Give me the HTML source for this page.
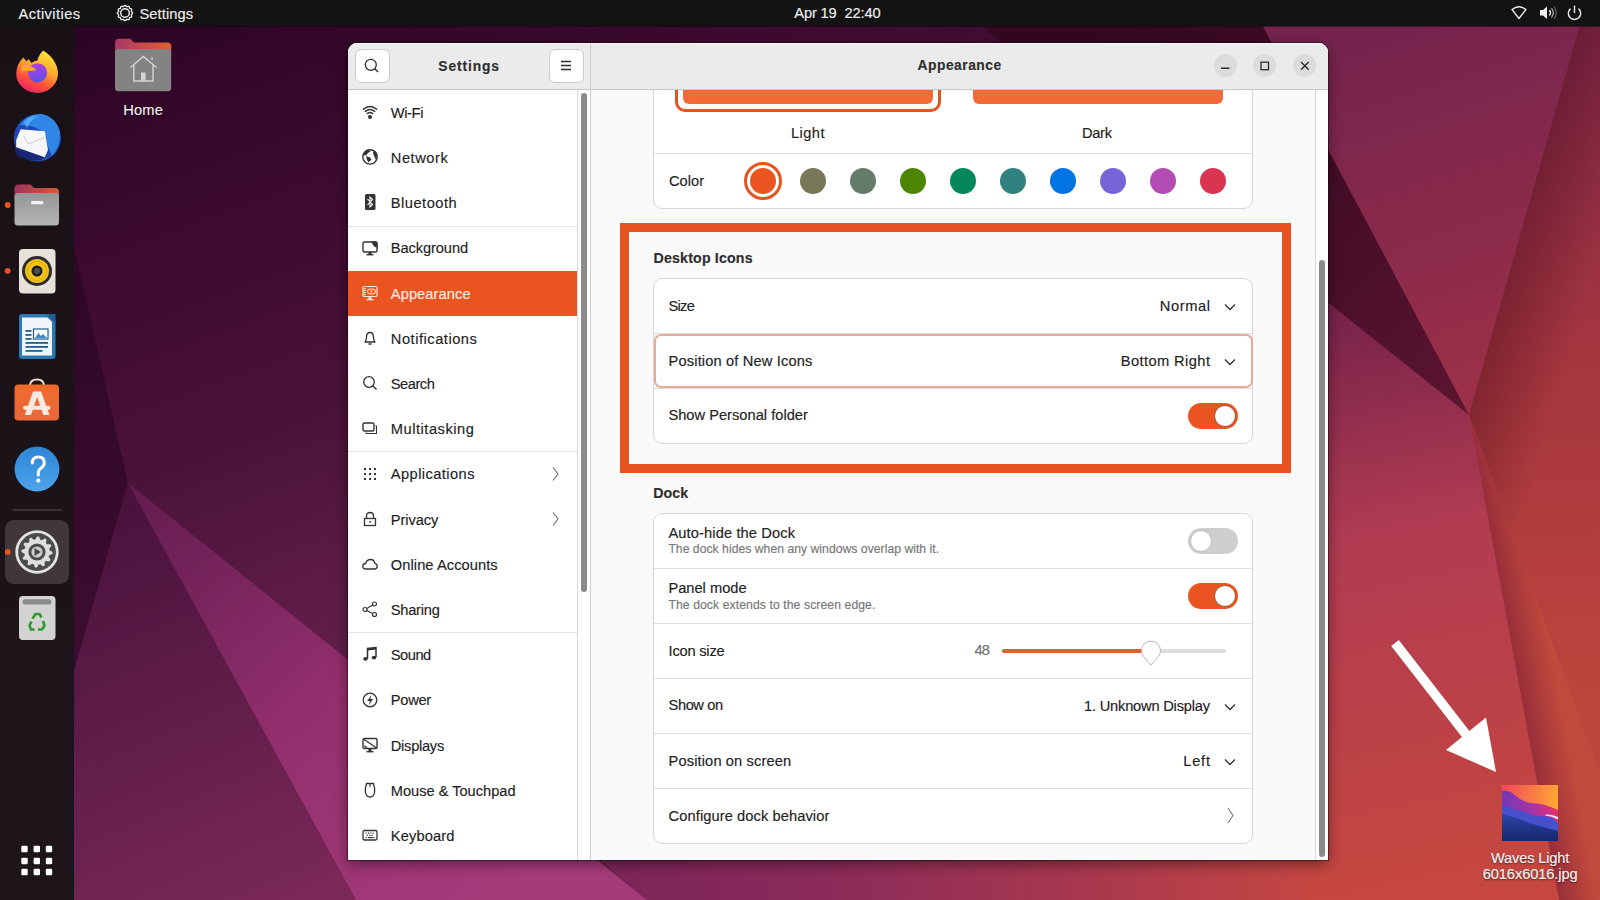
<!DOCTYPE html>
<html><head><meta charset="utf-8">
<style>
*{margin:0;padding:0;box-sizing:border-box}
html,body{width:1600px;height:900px;overflow:hidden;background:#3a0b2c;font-family:"Liberation Sans",sans-serif}
.abs{position:absolute}
.t{position:absolute;white-space:nowrap;line-height:1;-webkit-text-stroke:0.15px currentColor;font-family:"Liberation Sans",sans-serif}
</style></head><body>
<svg id="wall" width="1600" height="900" viewBox="0 0 1600 900" style="position:absolute;left:0;top:0">
<defs>
<linearGradient id="gUL" gradientUnits="userSpaceOnUse" x1="120" y1="30" x2="360" y2="680">
 <stop offset="0" stop-color="#2d0524"/>
 <stop offset="0.31" stop-color="#3d0a32"/>
 <stop offset="0.61" stop-color="#4a1238"/>
 <stop offset="0.88" stop-color="#5e1c46"/>
 <stop offset="1" stop-color="#641e4a"/>
</linearGradient>
<linearGradient id="gFarL" gradientUnits="userSpaceOnUse" x1="74" y1="250" x2="110" y2="670">
 <stop offset="0" stop-color="#2e0626"/>
 <stop offset="1" stop-color="#3c0d32"/>
</linearGradient>
<linearGradient id="gLowL" gradientUnits="userSpaceOnUse" x1="128" y1="500" x2="300" y2="900">
 <stop offset="0" stop-color="#48123c"/>
 <stop offset="1" stop-color="#7a2858"/>
</linearGradient>
<linearGradient id="gWedgeL" gradientUnits="userSpaceOnUse" x1="128" y1="483" x2="500" y2="900">
 <stop offset="0" stop-color="#621c4e"/>
 <stop offset="0.55" stop-color="#95306e"/>
 <stop offset="1" stop-color="#a63b7a"/>
</linearGradient>
<linearGradient id="gBot" gradientUnits="userSpaceOnUse" x1="600" y1="0" x2="1340" y2="0">
 <stop offset="0" stop-color="#7c2458"/>
 <stop offset="0.3" stop-color="#8a2b5a"/>
 <stop offset="0.65" stop-color="#a8384f"/>
 <stop offset="1" stop-color="#c84841"/>
</linearGradient>
<linearGradient id="gTop" gradientUnits="userSpaceOnUse" x1="348" y1="0" x2="980" y2="0">
 <stop offset="0" stop-color="#3e0a30"/>
 <stop offset="1" stop-color="#4e1538"/>
</linearGradient>
<linearGradient id="gDarkW" gradientUnits="userSpaceOnUse" x1="1100" y1="27" x2="1469" y2="415">
 <stop offset="0" stop-color="#330820"/>
 <stop offset="0.6" stop-color="#480e28"/>
 <stop offset="1" stop-color="#5c1530"/>
</linearGradient>
<linearGradient id="gA" gradientUnits="userSpaceOnUse" x1="1340" y1="40" x2="1460" y2="400">
 <stop offset="0" stop-color="#74234e"/>
 <stop offset="1" stop-color="#9c3048"/>
</linearGradient>
<linearGradient id="gB" gradientUnits="userSpaceOnUse" x1="1330" y1="300" x2="1450" y2="880">
 <stop offset="0" stop-color="#74214a"/>
 <stop offset="0.4" stop-color="#b03b52"/>
 <stop offset="1" stop-color="#c6473f"/>
</linearGradient>
<linearGradient id="gC" gradientUnits="userSpaceOnUse" x1="1590" y1="30" x2="1600" y2="700">
 <stop offset="0" stop-color="#862a4a"/>
 <stop offset="0.5" stop-color="#a5363f"/>
 <stop offset="1" stop-color="#be453c"/>
</linearGradient>
<linearGradient id="gCsh" gradientUnits="userSpaceOnUse" x1="1525" y1="220" x2="1602" y2="242">
 <stop offset="0" stop-color="#300010" stop-opacity="0.32"/>
 <stop offset="1" stop-color="#300010" stop-opacity="0"/>
</linearGradient>
<linearGradient id="gBand" gradientUnits="userSpaceOnUse" x1="1518" y1="680" x2="1556" y2="673">
 <stop offset="0" stop-color="#982e3a"/>
 <stop offset="1" stop-color="#c24a3c"/>
</linearGradient>
</defs>
<rect x="0" y="0" width="1600" height="900" fill="url(#gUL)"/>
<polygon points="74,247 128,483 74,672" fill="url(#gFarL)"/>
<polygon points="128,483 74,672 74,900 356,900" fill="url(#gLowL)"/>
<polygon points="128,483 647,900 356,900" fill="url(#gWedgeL)"/>
<polygon points="647,900 600,860 1340,860 1340,900" fill="url(#gBot)"/>
<rect x="1300" y="25" width="300" height="875" fill="url(#gB)"/>
<polygon points="1262,25 1580,25 1469,415" fill="url(#gA)"/>
<polygon points="980,25 1262,25 1469,415" fill="url(#gDarkW)"/>
<polygon points="1580,25 1600,25 1600,773 1469,415" fill="url(#gC)"/>
<polygon points="1580,25 1600,25 1600,773 1469,415" fill="url(#gCsh)"/>
<polygon points="1469,415 1600,773 1600,900 1559,900" fill="url(#gBand)"/>
</svg>
<div class="abs" style="left:0;top:0;width:1600px;height:26px;background:#131313;box-shadow:0 1px 0 rgba(20,0,10,.55)"></div>
<div class="t" style="left:18.50px;top:6.82px;font-size:14.67px;letter-spacing:0.411px;color:#eeeeee;">Activities</div>
<div class="t" style="left:139.40px;top:6.82px;font-size:14.67px;letter-spacing:0.107px;color:#eeeeee;">Settings</div>
<div class="t" style="left:794.30px;top:5.82px;font-size:14.67px;letter-spacing:-0.146px;color:#eeeeee;white-space:pre;">Apr 19  22:40</div>
<svg class="abs" style="left:115px;top:3px" width="20" height="20" viewBox="0 0 20 20">
<path d="M17.65,10.00 L17.60,10.27 L17.45,10.52 L17.23,10.76 L16.97,10.98 L16.72,11.19 L16.51,11.38 L16.37,11.59 L16.31,11.81 L16.33,12.06 L16.41,12.33 L16.53,12.64 L16.64,12.96 L16.71,13.27 L16.71,13.57 L16.63,13.82 L16.45,14.03 L16.19,14.18 L15.88,14.27 L15.55,14.34 L15.23,14.39 L14.95,14.45 L14.72,14.56 L14.56,14.72 L14.45,14.95 L14.39,15.23 L14.34,15.55 L14.27,15.88 L14.18,16.19 L14.03,16.45 L13.83,16.63 L13.57,16.71 L13.27,16.71 L12.96,16.64 L12.64,16.53 L12.33,16.41 L12.06,16.33 L11.81,16.31 L11.59,16.37 L11.38,16.51 L11.19,16.72 L10.98,16.97 L10.76,17.23 L10.52,17.45 L10.27,17.60 L10.00,17.65 L9.73,17.60 L9.48,17.45 L9.24,17.23 L9.02,16.97 L8.81,16.72 L8.62,16.51 L8.41,16.37 L8.19,16.31 L7.94,16.33 L7.67,16.41 L7.36,16.53 L7.04,16.64 L6.73,16.71 L6.43,16.71 L6.18,16.63 L5.97,16.45 L5.82,16.19 L5.73,15.88 L5.66,15.55 L5.61,15.23 L5.55,14.95 L5.44,14.72 L5.28,14.56 L5.05,14.45 L4.77,14.39 L4.45,14.34 L4.12,14.27 L3.81,14.18 L3.55,14.03 L3.37,13.82 L3.29,13.57 L3.29,13.27 L3.36,12.96 L3.47,12.64 L3.59,12.33 L3.67,12.06 L3.69,11.81 L3.63,11.59 L3.49,11.38 L3.28,11.19 L3.03,10.98 L2.77,10.76 L2.55,10.52 L2.40,10.27 L2.35,10.00 L2.40,9.73 L2.55,9.48 L2.77,9.24 L3.03,9.02 L3.28,8.81 L3.49,8.62 L3.63,8.41 L3.69,8.19 L3.67,7.94 L3.59,7.67 L3.47,7.36 L3.36,7.04 L3.29,6.73 L3.29,6.43 L3.37,6.17 L3.55,5.97 L3.81,5.82 L4.12,5.73 L4.45,5.66 L4.77,5.61 L5.05,5.55 L5.28,5.44 L5.44,5.28 L5.55,5.05 L5.61,4.77 L5.66,4.45 L5.73,4.12 L5.82,3.81 L5.97,3.55 L6.17,3.37 L6.43,3.29 L6.73,3.29 L7.04,3.36 L7.36,3.47 L7.67,3.59 L7.94,3.67 L8.19,3.69 L8.41,3.63 L8.62,3.49 L8.81,3.28 L9.02,3.03 L9.24,2.77 L9.48,2.55 L9.73,2.40 L10.00,2.35 L10.27,2.40 L10.52,2.55 L10.76,2.77 L10.98,3.03 L11.19,3.28 L11.38,3.49 L11.59,3.63 L11.81,3.69 L12.06,3.67 L12.33,3.59 L12.64,3.47 L12.96,3.36 L13.27,3.29 L13.57,3.29 L13.83,3.37 L14.03,3.55 L14.18,3.81 L14.27,4.12 L14.34,4.45 L14.39,4.77 L14.45,5.05 L14.56,5.28 L14.72,5.44 L14.95,5.55 L15.23,5.61 L15.55,5.66 L15.88,5.73 L16.19,5.82 L16.45,5.97 L16.63,6.17 L16.71,6.43 L16.71,6.73 L16.64,7.04 L16.53,7.36 L16.41,7.67 L16.33,7.94 L16.31,8.19 L16.37,8.41 L16.51,8.62 L16.72,8.81 L16.97,9.02 L17.23,9.24 L17.45,9.48 L17.60,9.73 Z" fill="none" stroke="#eee" stroke-width="1.3"/>
<circle cx="10" cy="10" r="4.3" fill="none" stroke="#eee" stroke-width="1.4"/></svg>
<svg class="abs" style="left:1505px;top:0" width="95" height="25" viewBox="0 0 95 25">
<path d="M7,9.5 Q14,4 21,9.5 L14,18.5 Z" fill="none" stroke="#eee" stroke-width="1.3" stroke-linejoin="round"/>
<path d="M35,10 L38,10 L42,6.5 L42,19 L38,15.5 L35,15.5 Z" fill="#eee"/>
<path d="M44.5,10 Q46.5,12.7 44.5,15.5" fill="none" stroke="#eee" stroke-width="1.3"/>
<path d="M46.5,8 Q50,12.7 46.5,17.5" fill="none" stroke="#bbb" stroke-width="1.1"/>
<path d="M49,6.5 Q53.5,12.7 49,19" fill="none" stroke="#777" stroke-width="1"/>
<path d="M65.5,8.6 A6.2,6.2 0 1 0 73.5,8.6" fill="none" stroke="#eee" stroke-width="1.4"/>
<line x1="69.5" y1="5.6" x2="69.5" y2="13" stroke="#eee" stroke-width="1.4"/>
</svg>
<div class="abs" style="left:0;top:26px;width:73.5px;height:874px;background:linear-gradient(#1a1116,#1e151b)"></div>
<svg class="abs" style="left:0;top:0" width="74" height="900" viewBox="0 0 74 900">
<defs>
<linearGradient id="ffo" x1="0.8" y1="0.05" x2="0.35" y2="1"><stop offset="0" stop-color="#ffe53d"/><stop offset="0.4" stop-color="#ffab2c"/><stop offset="0.72" stop-color="#ff5238"/><stop offset="1" stop-color="#ea2566"/></linearGradient>
<linearGradient id="ffp" x1="0.3" y1="0" x2="0.5" y2="1"><stop offset="0" stop-color="#b43ee6"/><stop offset="1" stop-color="#5c50e6"/></linearGradient>
<linearGradient id="tbb" x1="0" y1="0" x2="1" y2="1"><stop offset="0" stop-color="#1e9cf0"/><stop offset="1" stop-color="#2a3fa8"/></linearGradient>
<linearGradient id="fold" x1="0" y1="0" x2="1" y2="0"><stop offset="0" stop-color="#9e3560"/><stop offset="1" stop-color="#d85a30"/></linearGradient>
<linearGradient id="fbody" x1="0" y1="0" x2="0" y2="1"><stop offset="0" stop-color="#969696"/><stop offset="1" stop-color="#b4b4b4"/></linearGradient>
<linearGradient id="hlp" x1="0" y1="0" x2="0" y2="1"><stop offset="0" stop-color="#2d86d6"/><stop offset="1" stop-color="#4ea4ea"/></linearGradient>
<linearGradient id="shop" x1="0" y1="0" x2="0" y2="1"><stop offset="0" stop-color="#f06a2c"/><stop offset="1" stop-color="#e8683a"/></linearGradient>
</defs>
<!-- firefox -->
<path d="M23.3,57.5 L26.5,61.5 L28.5,59 L31.5,63 Q34.5,60.5 37.5,60.5 Q38.5,55 43.2,50.5 Q53,56.5 56.8,66.5 Q58.5,72 57.8,76 A20.9,19.5 0 0 1 16.2,74 Q16.2,64.5 23.3,57.5 Z" fill="url(#ffo)"/>
<circle cx="37.5" cy="72.8" r="9.6" fill="url(#ffp)"/>
<path d="M21.5,66 Q28,63 36.5,69.8 Q31,72 27,70.5 Q24,70 21.5,72 Z" fill="#ffa62e"/>
<!-- thunderbird -->
<circle cx="37.4" cy="138" r="23.6" fill="#2048b0"/>
<path d="M20,125 Q28,113 42,114 Q56,117 60,132 Q61,146 52,156 Q48,148 46,138 Q42,128 30,126 Z" fill="#2f86e6"/>
<path d="M24,122 Q30,115 38,116 Q30,120 27,128 Z" fill="#5ab4ff" opacity="0.8"/>
<path d="M18,157 Q14,150 14.5,146 L44,157.3 Q40,162 30,160 Z" fill="#1a2470" opacity="0.9"/>
<path d="M16.2,139.9 L20.6,129.3 L44.8,131.2 L48,149.8 L44.8,157.3 L16.2,147.3 Z" fill="#f6f6f8"/>
<path d="M23.7,136.1 L28.7,143.9 L44.8,137.4" fill="none" stroke="#c8c8d0" stroke-width="0.9"/>
<!-- files -->
<path d="M14.5,189 Q14.5,184.5 18.5,184.5 L30.5,184.5 L34,188 L55,188 Q59,188 59,192 L59,200 L14.5,200 Z" fill="url(#fold)"/>
<rect x="14.5" y="193" width="44.5" height="32.6" rx="3.5" fill="url(#fbody)"/>
<rect x="31" y="201" width="12.5" height="3.2" rx="1.5" fill="#f4f4f4"/>
<circle cx="7.7" cy="205" r="2.9" fill="#e95420"/>
<!-- rhythmbox -->
<rect x="19" y="249" width="36.5" height="44.5" rx="4" fill="#e6e2da"/>
<circle cx="37" cy="271" r="15" fill="#2b2b2b"/>
<circle cx="37" cy="271" r="12" fill="#f0c419"/>
<circle cx="37" cy="271" r="9.5" fill="none" stroke="#d6a712" stroke-width="1"/>
<circle cx="37" cy="271" r="5.5" fill="#1e1e1e"/>
<circle cx="37" cy="271" r="3" fill="#505050"/>
<circle cx="7.7" cy="270.8" r="2.9" fill="#e95420"/>
<!-- writer -->
<path d="M19,317 Q19,314 22,314 L49,314 L55.5,320.5 L55.5,356 Q55.5,359 52.5,359 L22,359 Q19,359 19,356 Z" fill="#2b79b4"/>
<path d="M22,317.5 L47.5,317.5 L52,322 L52,355.5 L22,355.5 Z" fill="#f1f5f9"/>
<path d="M46,314 L55.5,314 L55.5,323.5 Z" fill="#1d5f93"/>
<rect x="25.5" y="330" width="6" height="1.8" fill="#1f5f8f"/>
<rect x="25.5" y="334" width="6" height="1.8" fill="#1f5f8f"/>
<rect x="25.5" y="338" width="6" height="1.8" fill="#1f5f8f"/>
<rect x="33.5" y="329" width="14.5" height="10" fill="#fff" stroke="#1f5f8f" stroke-width="1.2"/>
<path d="M35,338 L38.5,333 L41,336 L43,334 L47,338 Z" fill="#3a8ccc"/>
<rect x="25.5" y="342" width="22.5" height="1.8" fill="#1f5f8f"/>
<rect x="25.5" y="346" width="22.5" height="1.8" fill="#1f5f8f"/>
<rect x="25.5" y="350" width="17" height="1.8" fill="#1f5f8f"/>
<!-- app center -->
<path d="M30,386 Q30,379.5 37,379.5 Q44,379.5 44,386" fill="none" stroke="#f2d8c8" stroke-width="1.8"/>
<rect x="14.5" y="384.5" width="44.5" height="36" rx="4" fill="url(#shop)"/>
<path d="M33,391.5 L41.2,391.5 L49.5,415 L43.3,415 L37.1,397 L31,415 L24.8,415 Z" fill="#fbe9df"/>
<rect x="23" y="405.8" width="27.6" height="4" rx="2" fill="#fbe9df"/>
<!-- help -->
<circle cx="37" cy="469" r="22.4" fill="url(#hlp)"/>
<path d="M32.3,463 Q32.3,457 38.3,457 Q44.3,457 44.3,462.5 Q44.3,466 40.8,468.2 Q38.3,469.8 38.3,473.5 L38.3,475" fill="none" stroke="#fff" stroke-width="3" stroke-linecap="round"/><circle cx="38.3" cy="480.6" r="2.1" fill="#fff"/>
<!-- separator -->
<rect x="12.5" y="509.5" width="49.5" height="1" fill="#5a5056"/>
<!-- settings active -->
<rect x="5" y="520" width="64" height="64" rx="9" fill="#3f373b"/>
<circle cx="7.7" cy="552" r="2.9" fill="#e95420"/>
<circle cx="37" cy="552" r="21.7" fill="#e4e4e4"/>
<circle cx="37" cy="552" r="18.9" fill="#4b4b4b"/>
<path d="M52.60,552.00 L52.47,554.04 L49.17,555.26 L48.64,556.82 L50.51,559.80 L49.38,561.50 L45.91,560.91 L44.67,562.00 L44.80,565.51 L42.97,566.41 L40.26,564.17 L38.64,564.49 L37.00,567.60 L34.96,567.47 L33.74,564.17 L32.18,563.64 L29.20,565.51 L27.50,564.38 L28.09,560.91 L27.00,559.67 L23.49,559.80 L22.59,557.97 L24.83,555.26 L24.51,553.64 L21.40,552.00 L21.53,549.96 L24.83,548.74 L25.36,547.18 L23.49,544.20 L24.62,542.50 L28.09,543.09 L29.33,542.00 L29.20,538.49 L31.03,537.59 L33.74,539.83 L35.36,539.51 L37.00,536.40 L39.04,536.53 L40.26,539.83 L41.82,540.36 L44.80,538.49 L46.50,539.62 L45.91,543.09 L47.00,544.33 L50.51,544.20 L51.41,546.03 L49.17,548.74 L49.49,550.36 Z" fill="#dedede"/>
<circle cx="37" cy="552" r="8.6" fill="#4b4b4b"/>
<circle cx="37" cy="552" r="5.6" fill="#cfcfcf"/>
<path d="M34.5,548 L41,552 L34.5,556 Z" fill="#4b4b4b"/>
<!-- trash -->
<rect x="19" y="596" width="36.5" height="44" rx="4" fill="#d3d3d3"/>
<rect x="22.5" y="599.3" width="29" height="5.2" rx="2.5" fill="#8c8c8c"/>
<g fill="none" stroke="#2f9a2f" stroke-width="2.6">
<path d="M32.5,618.5 L35.5,614 L39.5,614 L41.5,617.5"/>
<path d="M43,621 L44.5,625.5 L42,629.5 L38,629.5"/>
<path d="M34.5,629.5 L31,629.5 L29.5,625.5 L31.5,621.5"/>
</g>
<!-- app grid -->
<g fill="#ffffff">
<rect x="21.3" y="845.8" width="6.4" height="6.4" rx="1.3"/><rect x="33.599999999999994" y="845.8" width="6.4" height="6.4" rx="1.3"/><rect x="45.8" y="845.8" width="6.4" height="6.4" rx="1.3"/><rect x="21.3" y="857.8" width="6.4" height="6.4" rx="1.3"/><rect x="33.599999999999994" y="857.8" width="6.4" height="6.4" rx="1.3"/><rect x="45.8" y="857.8" width="6.4" height="6.4" rx="1.3"/><rect x="21.3" y="868.8" width="6.4" height="6.4" rx="1.3"/><rect x="33.599999999999994" y="868.8" width="6.4" height="6.4" rx="1.3"/><rect x="45.8" y="868.8" width="6.4" height="6.4" rx="1.3"/>
</g>
</svg>
<svg class="abs" style="left:110px;top:34px" width="66" height="64" viewBox="110 34 66 64">
<defs><linearGradient id="hfold" x1="0" y1="0" x2="1" y2="0"><stop offset="0" stop-color="#a83668"/><stop offset="1" stop-color="#e06030"/></linearGradient></defs>
<path d="M115,43 Q115,38.8 119,38.8 L130,38.8 L134,42.5 L167.5,42.5 Q171.2,42.5 171.2,46 L171.2,55 L115,55 Z" fill="url(#hfold)"/>
<rect x="115" y="49" width="56.2" height="42.3" rx="3.5" fill="#838383"/>
<path d="M130.5,67.5 L143.3,56.5 L156.5,67.5" fill="none" stroke="#d4d4d4" stroke-width="1.4"/>
<path d="M133.8,65 L133.8,81 L153,81 L153,65" fill="none" stroke="#d4d4d4" stroke-width="1.4"/>
<rect x="141" y="72.5" width="4.6" height="8.5" fill="#d4d4d4"/>
<circle cx="152" cy="58.5" r="1.1" fill="#d4d4d4"/>
</svg>
<div class="t" style="left:123.30px;top:102.82px;font-size:14.67px;letter-spacing:0.133px;color:#f0f0f0;text-shadow:0 1px 2px rgba(0,0,0,.6);">Home</div>
<svg class="abs" style="left:1502px;top:785px" width="56" height="56" viewBox="0 0 56 56">
<defs>
<linearGradient id="wsky" x1="0" y1="0" x2="1" y2="0.2"><stop offset="0" stop-color="#f2455e"/><stop offset="1" stop-color="#ffa632"/></linearGradient>
<linearGradient id="wpurp" x1="0" y1="0" x2="1" y2="0"><stop offset="0" stop-color="#7438b4"/><stop offset="0.55" stop-color="#a834a8"/><stop offset="1" stop-color="#e8306a"/></linearGradient>
<linearGradient id="wnavy" x1="0" y1="0" x2="0" y2="1"><stop offset="0" stop-color="#2a44a8"/><stop offset="1" stop-color="#18286a"/></linearGradient>
</defs>
<rect width="56" height="56" fill="url(#wsky)"/>
<path d="M0,6 Q8,5 14,11 Q20,17 30,18 Q44,19 56,25 L56,56 L0,56 Z" fill="url(#wpurp)"/>
<path d="M0,20 Q12,24 22,27 Q34,32 42,31 Q50,31 56,38 L56,56 L0,56 Z" fill="#4650cc"/>
<path d="M0,29 Q16,33 28,38 Q40,42 56,46 L56,56 L0,56 Z" fill="url(#wnavy)"/>
<path d="M43,30.5 Q50,31 56,34.5 L56,32 Q50,29 44,29.5 Z" fill="#e4e6ff"/>
</svg>
<div class="t" style="left:1491.00px;top:851.12px;font-size:14.67px;letter-spacing:-0.175px;color:#f4f4f4;text-shadow:0 1px 2px rgba(0,0,0,.6);">Waves Light</div>
<div class="t" style="left:1482.70px;top:867.12px;font-size:14.67px;letter-spacing:-0.096px;color:#f4f4f4;text-shadow:0 1px 2px rgba(0,0,0,.6);">6016x6016.jpg</div>
<svg class="abs" style="left:1380px;top:630px" width="130" height="150" viewBox="1380 630 130 150">
<line x1="1395" y1="643" x2="1468" y2="737" stroke="#ffffff" stroke-width="9.5"/>
<polygon points="1446,750 1486,717.5 1496,772" fill="#ffffff"/>
</svg>
<div class="abs" style="left:348px;top:43px;width:980px;height:817px;border-radius:9px 9px 0 0;box-shadow:0 0 0 1px rgba(20,0,10,.45),0 4px 14px rgba(0,0,0,.45)"></div>
<div class="abs" style="left:348px;top:43px;width:980px;height:817px;border-radius:9px 9px 0 0;overflow:hidden;background:#fafafa">
<div class="abs" style="left:-348px;top:-43px;width:1600px;height:900px">
<div class="abs" style="left:348px;top:43px;width:980px;height:46px;background:#ebebeb;box-shadow:inset 0 1px 0 #fbfbfb"></div>
<div class="abs" style="left:348px;top:89px;width:980px;height:1px;background:#c9c9c9"></div>
<div class="abs" style="left:348px;top:90px;width:242px;height:770px;background:#ffffff"></div>
<div class="abs" style="left:590px;top:43px;width:1px;height:817px;background:#cdcdcd"></div>
<div class="abs" style="left:577px;top:90px;width:1px;height:770px;background:#d8d8d8"></div>
<div class="abs" style="left:581px;top:92.5px;width:6px;height:499px;border-radius:3px;background:#8a8a8a"></div>
<div class="abs" style="left:1315px;top:90px;width:1px;height:770px;background:#d8d8d8"></div>
<div class="abs" style="left:1316px;top:90px;width:12px;height:770px;background:#fdfdfd"></div>
<div class="abs" style="left:1319px;top:260px;width:6px;height:597px;border-radius:3px;background:#8a8a8a"></div>
<div class="abs" style="left:355px;top:49px;width:35px;height:34px;border-radius:6px;background:#fff;border:1px solid #cbcbcb"></div>
<svg class="abs" style="left:360px;top:54px" width="24" height="24" viewBox="0 0 24 24">
<circle cx="10.8" cy="10.8" r="5.5" fill="none" stroke="#2e2e2e" stroke-width="1.3"/>
<line x1="14.8" y1="14.8" x2="18" y2="18" stroke="#2e2e2e" stroke-width="1.5"/></svg>
<div class="abs" style="left:548.5px;top:49px;width:35px;height:34px;border-radius:6px;background:#fff;border:1px solid #cbcbcb"></div>
<svg class="abs" style="left:556px;top:56px" width="20" height="20" viewBox="0 0 20 20">
<g stroke="#2e2e2e" stroke-width="1.3"><line x1="5" y1="5.5" x2="15" y2="5.5"/><line x1="5" y1="9.5" x2="15" y2="9.5"/><line x1="5" y1="13.5" x2="15" y2="13.5"/></g></svg>
<div class="t" style="left:438.30px;top:59.85px;font-size:13.8px;letter-spacing:0.893px;color:#2e2e2e;font-weight:bold;">Settings</div>
<div class="t" style="left:917.50px;top:59.45px;font-size:13.8px;letter-spacing:0.522px;color:#2e2e2e;font-weight:bold;">Appearance</div>
<div class="abs" style="left:1213.9px;top:54px;width:23px;height:23px;border-radius:50%;background:#dcdcdc"></div>
<div class="abs" style="left:1253.2px;top:54px;width:23px;height:23px;border-radius:50%;background:#dcdcdc"></div>
<div class="abs" style="left:1293.0px;top:54px;width:23px;height:23px;border-radius:50%;background:#dcdcdc"></div>
<svg class="abs" style="left:1200px;top:50px" width="120" height="30" viewBox="1200 50 120 30">
<line x1="1221" y1="68.2" x2="1229.5" y2="68.2" stroke="#2e2e2e" stroke-width="1.4"/>
<rect x="1261" y="62.2" width="7.5" height="7.5" fill="none" stroke="#2e2e2e" stroke-width="1.3"/>
<path d="M1301,62 L1308.7,69.7 M1308.7,62 L1301,69.7" stroke="#2e2e2e" stroke-width="1.4"/>
</svg>
<div class="abs" style="left:348px;top:270.5px;width:229px;height:45px;background:#e95420"></div>
<div class="abs" style="left:348px;top:225.5px;width:229px;height:1px;background:#e4e4e4"></div>
<div class="abs" style="left:348px;top:451px;width:229px;height:1px;background:#e4e4e4"></div>
<div class="abs" style="left:348px;top:632px;width:229px;height:1px;background:#e4e4e4"></div>
<div class="t" style="left:390.80px;top:105.82px;font-size:14.67px;letter-spacing:-0.387px;color:#1e1e1e;">Wi-Fi</div>
<svg class="abs" style="left:360px;top:102.00px" width="20" height="20" viewBox="0 0 20 20"><g fill="none" stroke="#333333" stroke-width="1.45" stroke-linecap="round"><path d="M3.3,7.3 Q10,1.7 16.7,7.3"/><path d="M5.3,9.4 Q10,5.4 14.7,9.4"/><path d="M7.3,11.6 Q10,9.4 12.7,11.6"/></g><circle cx="10" cy="14.9" r="2" fill="#333333"/></svg>
<div class="t" style="left:390.80px;top:151.02px;font-size:14.67px;letter-spacing:0.542px;color:#1e1e1e;">Network</div>
<svg class="abs" style="left:360px;top:147.20px" width="20" height="20" viewBox="0 0 20 20"><circle cx="10" cy="9.9" r="7.2" fill="none" stroke="#333333" stroke-width="1.4"/><path d="M3.5,8 L5,4.5 L8,2.5 L10.5,4.5 L8,6 L6,8.5 Z" fill="#333333"/><path d="M6,9 L10,10.5 L11.5,12.5 L8.5,15.5 L7,13 Z" fill="#333333"/><path d="M13,5 L16,4.5 L17,9 L16,13 L14.5,10 L13.5,7.5 Z" fill="#333333"/></svg>
<div class="t" style="left:390.80px;top:196.22px;font-size:14.67px;letter-spacing:0.487px;color:#1e1e1e;">Bluetooth</div>
<svg class="abs" style="left:360px;top:192.40px" width="20" height="20" viewBox="0 0 20 20"><g transform="translate(2,2)"><rect x="3" y="0" width="10.5" height="16" rx="1.5" fill="#333333"/><path d="M5.5,5 L10.5,10.5 L8,13 L8,3 L10.5,5.5 L5.5,11" fill="none" stroke="#fff" stroke-width="1.1"/></g></svg>
<div class="t" style="left:390.80px;top:241.42px;font-size:14.67px;letter-spacing:-0.100px;color:#1e1e1e;">Background</div>
<svg class="abs" style="left:360px;top:237.60px" width="20" height="20" viewBox="0 0 20 20"><g transform="translate(2,2)"><rect x="1" y="2" width="14" height="10" rx="1.5" fill="none" stroke="#333333" stroke-width="1.4"/><path d="M9.5,1.5 L14,1.5 Q15.5,1.5 15.5,3 L15.5,7.5 Q11,7.5 9.5,1.5 Z" fill="#333333"/><rect x="6.5" y="12" width="3" height="2" fill="#333333"/><rect x="4.5" y="14" width="7" height="1.4" fill="#333333"/></g></svg>
<div class="t" style="left:390.80px;top:286.62px;font-size:14.67px;letter-spacing:0.078px;color:#fdeee6;">Appearance</div>
<svg class="abs" style="left:360px;top:282.80px" width="20" height="20" viewBox="0 0 20 20"><g transform="translate(2,2)"><rect x="1" y="1.5" width="14" height="10" rx="1.3" fill="none" stroke="#fbe3d8" stroke-width="1.2"/><path d="M1.5,3.5 H4 M1.5,5.5 H4 M1.5,7.5 H4 M1.5,9.5 H4" stroke="#fbe3d8" stroke-width="1"/><ellipse cx="9.5" cy="6.5" rx="4" ry="2.5" fill="none" stroke="#fbe3d8" stroke-width="1.1"/><circle cx="9.5" cy="6.5" r="1.1" fill="#fbe3d8"/><rect x="6.5" y="12" width="3" height="2" fill="#fbe3d8"/><rect x="4.5" y="14" width="7" height="1.3" fill="#fbe3d8"/></g></svg>
<div class="t" style="left:390.80px;top:331.82px;font-size:14.67px;letter-spacing:0.517px;color:#1e1e1e;">Notifications</div>
<svg class="abs" style="left:360px;top:328.00px" width="20" height="20" viewBox="0 0 20 20"><g transform="translate(2,2)"><path d="M3,12 Q4.5,10.5 4.5,7 Q4.5,2.5 8,2.5 Q11.5,2.5 11.5,7 Q11.5,10.5 13,12 Z" fill="none" stroke="#333333" stroke-width="1.3" stroke-linejoin="round"/><path d="M6.5,14 H9.5" stroke="#333333" stroke-width="1.5"/></g></svg>
<div class="t" style="left:390.80px;top:377.02px;font-size:14.67px;letter-spacing:-0.480px;color:#1e1e1e;">Search</div>
<svg class="abs" style="left:360px;top:373.20px" width="20" height="20" viewBox="0 0 20 20"><g transform="translate(2,2)"><circle cx="7" cy="7" r="5.3" fill="none" stroke="#333333" stroke-width="1.3"/><line x1="10.8" y1="10.8" x2="14.5" y2="14.5" stroke="#333333" stroke-width="1.4"/></g></svg>
<div class="t" style="left:390.80px;top:422.22px;font-size:14.67px;letter-spacing:0.514px;color:#1e1e1e;">Multitasking</div>
<svg class="abs" style="left:360px;top:418.40px" width="20" height="20" viewBox="0 0 20 20"><g transform="translate(2,2)"><rect x="1" y="3" width="11" height="8" rx="1.5" fill="none" stroke="#333333" stroke-width="1.4"/><path d="M13.5,6 L14.5,6 L14.5,13.5 L4,13.5 L4,12.5" fill="none" stroke="#333333" stroke-width="1.1"/></g></svg>
<div class="t" style="left:390.80px;top:467.42px;font-size:14.67px;letter-spacing:0.427px;color:#1e1e1e;">Applications</div>
<svg class="abs" style="left:360px;top:463.60px" width="20" height="20" viewBox="0 0 20 20"><g transform="translate(2,2)"><g fill="#333333"><rect x="2" y="2" width="2" height="2"/><rect x="7" y="2" width="2" height="2"/><rect x="12" y="2" width="2" height="2"/><rect x="2" y="7" width="2" height="2"/><rect x="7" y="7" width="2" height="2"/><rect x="12" y="7" width="2" height="2"/><rect x="2" y="12" width="2" height="2"/><rect x="7" y="12" width="2" height="2"/><rect x="12" y="12" width="2" height="2"/></g></g></svg>
<svg class="abs" style="left:550px;top:465.60px" width="10" height="16" viewBox="0 0 10 16"><path d="M3,1.5 L8,8 L3,14.5" fill="none" stroke="#6a6a6a" stroke-width="1.1"/></svg>
<div class="t" style="left:390.80px;top:512.62px;font-size:14.67px;letter-spacing:-0.075px;color:#1e1e1e;">Privacy</div>
<svg class="abs" style="left:360px;top:508.80px" width="20" height="20" viewBox="0 0 20 20"><g transform="translate(2,2)"><path d="M4.5,7.5 V5 Q4.5,1.5 8,1.5 Q11.5,1.5 11.5,5 V7.5" fill="none" stroke="#333333" stroke-width="1.3"/><rect x="2.5" y="7.5" width="11" height="7" fill="none" stroke="#333333" stroke-width="1.3"/><rect x="7.2" y="10.2" width="1.6" height="1.6" fill="#333333"/></g></svg>
<svg class="abs" style="left:550px;top:510.80px" width="10" height="16" viewBox="0 0 10 16"><path d="M3,1.5 L8,8 L3,14.5" fill="none" stroke="#6a6a6a" stroke-width="1.1"/></svg>
<div class="t" style="left:390.80px;top:557.82px;font-size:14.67px;letter-spacing:0.068px;color:#1e1e1e;">Online Accounts</div>
<svg class="abs" style="left:360px;top:554.00px" width="20" height="20" viewBox="0 0 20 20"><g transform="translate(2,2)"><path d="M4,13 Q0.8,13 0.8,10.3 Q0.8,7.5 3.8,7.5 Q4.5,3.5 8.5,3.5 Q12.2,3.5 12.8,7.3 Q15.2,7.8 15.2,10.3 Q15.2,13 12.5,13 Z" fill="none" stroke="#333333" stroke-width="1.3"/></g></svg>
<div class="t" style="left:390.80px;top:603.02px;font-size:14.67px;letter-spacing:-0.250px;color:#1e1e1e;">Sharing</div>
<svg class="abs" style="left:360px;top:599.20px" width="20" height="20" viewBox="0 0 20 20"><g transform="translate(2,2)"><circle cx="3" cy="8.5" r="2" fill="none" stroke="#333333" stroke-width="1.2"/><circle cx="12.5" cy="3" r="2" fill="none" stroke="#333333" stroke-width="1.2"/><circle cx="12.5" cy="13.5" r="2" fill="none" stroke="#333333" stroke-width="1.2"/><path d="M4.8,7.5 L10.7,4 M4.8,9.5 L10.7,12.5" stroke="#333333" stroke-width="1.1"/></g></svg>
<div class="t" style="left:390.80px;top:648.22px;font-size:14.67px;letter-spacing:-0.488px;color:#1e1e1e;">Sound</div>
<svg class="abs" style="left:360px;top:644.40px" width="20" height="20" viewBox="0 0 20 20"><g transform="translate(2,2)"><path d="M5.5,12.5 V2.5 L14,1.5 V11" fill="none" stroke="#333333" stroke-width="1.5"/><path d="M5.5,2.5 L14,1.5 V3.5 L5.5,4.5 Z" fill="#333333"/><ellipse cx="3.5" cy="12.8" rx="2.3" ry="1.9" fill="#333333"/><ellipse cx="12" cy="11.6" rx="2.3" ry="1.9" fill="#333333"/></g></svg>
<div class="t" style="left:390.80px;top:693.42px;font-size:14.67px;letter-spacing:-0.288px;color:#1e1e1e;">Power</div>
<svg class="abs" style="left:360px;top:689.60px" width="20" height="20" viewBox="0 0 20 20"><g transform="translate(2,2)"><circle cx="8" cy="8" r="6.8" fill="none" stroke="#333333" stroke-width="1.3"/><path d="M9.6,2.8 L5.2,9 L7.9,9 L6.6,13.4 L11,7 L8.3,7 Z" fill="#333333"/></g></svg>
<div class="t" style="left:390.80px;top:738.62px;font-size:14.67px;letter-spacing:-0.279px;color:#1e1e1e;">Displays</div>
<svg class="abs" style="left:360px;top:734.80px" width="20" height="20" viewBox="0 0 20 20"><g transform="translate(2,2)"><rect x="1" y="1.5" width="14" height="10" rx="1.3" fill="none" stroke="#333333" stroke-width="1.4"/><path d="M1.5,2 L14.5,11" stroke="#333333" stroke-width="1.2"/><path d="M2.5,8 L6,10.5 L2.5,10.5 Z" fill="#333333"/><rect x="6.5" y="12" width="3" height="2" fill="#333333"/><rect x="4.5" y="14" width="7" height="1.4" fill="#333333"/></g></svg>
<div class="t" style="left:390.80px;top:783.82px;font-size:14.67px;letter-spacing:-0.030px;color:#1e1e1e;">Mouse &amp; Touchpad</div>
<svg class="abs" style="left:360px;top:780.00px" width="20" height="20" viewBox="0 0 20 20"><g transform="translate(2,2)"><path d="M4.5,1.5 H11.5 Q13,6 12.6,10 Q12,15 8,15 Q4,15 3.4,10 Q3,6 4.5,1.5 Z" fill="none" stroke="#333333" stroke-width="1.3"/><line x1="8" y1="1.5" x2="8" y2="5" stroke="#333333" stroke-width="1.1"/></g></svg>
<div class="t" style="left:390.80px;top:829.02px;font-size:14.67px;letter-spacing:0.114px;color:#1e1e1e;">Keyboard</div>
<svg class="abs" style="left:360px;top:825.20px" width="20" height="20" viewBox="0 0 20 20"><g transform="translate(2,2)"><rect x="1" y="3.5" width="14" height="9.5" rx="1.5" fill="none" stroke="#333333" stroke-width="1.3"/><g fill="#333333"><rect x="3.5" y="5.5" width="1.2" height="1.2"/><rect x="5.9" y="5.5" width="1.2" height="1.2"/><rect x="8.3" y="5.5" width="1.2" height="1.2"/><rect x="10.7" y="5.5" width="1.2" height="1.2"/><rect x="4.7" y="7.8" width="1.2" height="1.2"/><rect x="7.1" y="7.8" width="1.2" height="1.2"/><rect x="9.5" y="7.8" width="1.2" height="1.2"/><rect x="3.5" y="10" width="1.2" height="1.2"/><rect x="5.9" y="10" width="4.8" height="1.2"/><rect x="11.3" y="10" width="1.2" height="1.2"/></g></g></svg>
<div class="abs" style="left:591px;top:90px;width:724px;height:770px;overflow:hidden"><div class="abs" style="left:-591px;top:-90px;width:1600px;height:900px">
<div class="abs" style="left:653px;top:40px;width:600px;height:169px;background:#fff;border:1px solid #d6d6d6;border-radius:9px"></div>
<div class="abs" style="left:654px;top:153px;width:598px;height:1px;background:#dedede"></div>
<div class="abs" style="left:675px;top:40px;width:266px;height:71.5px;border:3.6px solid #e4541f;border-radius:10px"></div>
<div class="abs" style="left:683px;top:40px;width:250px;height:63.5px;background:#f26a36;border-radius:6px"></div>
<div class="abs" style="left:973px;top:40px;width:250px;height:63.5px;background:#f26a36;border-radius:6px"></div>
<div class="t" style="left:791.00px;top:125.82px;font-size:14.67px;letter-spacing:0.438px;color:#1e1e1e;">Light</div>
<div class="t" style="left:1082.00px;top:125.82px;font-size:14.67px;letter-spacing:-0.317px;color:#1e1e1e;">Dark</div>
<div class="t" style="left:669.00px;top:173.82px;font-size:14.67px;letter-spacing:0.000px;color:#1e1e1e;">Color</div>
<div class="abs" style="left:750px;top:167.5px;width:26px;height:26px;border-radius:50%;background:#e95420"></div>
<div class="abs" style="left:800px;top:167.5px;width:26px;height:26px;border-radius:50%;background:#787859"></div>
<div class="abs" style="left:850px;top:167.5px;width:26px;height:26px;border-radius:50%;background:#657b69"></div>
<div class="abs" style="left:900px;top:167.5px;width:26px;height:26px;border-radius:50%;background:#4b8501"></div>
<div class="abs" style="left:950px;top:167.5px;width:26px;height:26px;border-radius:50%;background:#03875b"></div>
<div class="abs" style="left:1000px;top:167.5px;width:26px;height:26px;border-radius:50%;background:#308280"></div>
<div class="abs" style="left:1050px;top:167.5px;width:26px;height:26px;border-radius:50%;background:#0073e5"></div>
<div class="abs" style="left:1100px;top:167.5px;width:26px;height:26px;border-radius:50%;background:#7764d8"></div>
<div class="abs" style="left:1150px;top:167.5px;width:26px;height:26px;border-radius:50%;background:#b34cb3"></div>
<div class="abs" style="left:1200px;top:167.5px;width:26px;height:26px;border-radius:50%;background:#da3450"></div>
<div class="abs" style="left:743.5px;top:161.5px;width:38px;height:38px;border-radius:50%;border:3px solid #e4541f"></div>
<div class="t" style="left:653.60px;top:250.81px;font-size:14.2px;letter-spacing:0.163px;color:#2e2e2e;font-weight:bold;">Desktop Icons</div>
<div class="abs" style="left:653px;top:278px;width:600px;height:166px;background:#fff;border:1px solid #d6d6d6;border-radius:9px"></div>
<div class="abs" style="left:654px;top:333px;width:598px;height:1px;background:#dedede"></div>
<div class="abs" style="left:654px;top:388px;width:598px;height:1px;background:#dedede"></div>
<div class="abs" style="left:653.5px;top:333.5px;width:599px;height:54.5px;border:2px solid #e6ab9a;border-radius:7px"></div>
<div class="t" style="left:668.40px;top:298.52px;font-size:14.67px;letter-spacing:-0.700px;color:#222;">Size</div>
<div class="t" style="left:1159.70px;top:298.52px;font-size:14.67px;letter-spacing:0.620px;color:#222;">Normal</div>
<svg class="abs" style="left:1223px;top:301.5px" width="14" height="10" viewBox="0 0 14 10"><path d="M2,2.5 L7,7.5 L12,2.5" fill="none" stroke="#2e2e2e" stroke-width="1.25"/></svg>
<div class="t" style="left:668.60px;top:353.52px;font-size:14.67px;letter-spacing:0.138px;color:#222;">Position of New Icons</div>
<div class="t" style="left:1120.70px;top:353.52px;font-size:14.67px;letter-spacing:0.418px;color:#222;">Bottom Right</div>
<svg class="abs" style="left:1223px;top:356.5px" width="14" height="10" viewBox="0 0 14 10"><path d="M2,2.5 L7,7.5 L12,2.5" fill="none" stroke="#2e2e2e" stroke-width="1.25"/></svg>
<div class="t" style="left:668.40px;top:408.42px;font-size:14.67px;letter-spacing:0.008px;color:#222;">Show Personal folder</div>
<div class="abs" style="left:1188px;top:403px;width:50px;height:25.5px;border-radius:13px;background:#e95420"></div><div class="abs" style="left:1213.5px;top:404.6px;width:22.5px;height:22.5px;border-radius:50%;background:#fff;border:1px solid #a9532f"></div>
<div class="t" style="left:653.30px;top:486.21px;font-size:14.2px;letter-spacing:0.067px;color:#2e2e2e;font-weight:bold;">Dock</div>
<div class="abs" style="left:653px;top:513px;width:600px;height:331px;background:#fff;border:1px solid #d6d6d6;border-radius:9px"></div>
<div class="abs" style="left:654px;top:568px;width:598px;height:1px;background:#dedede"></div>
<div class="abs" style="left:654px;top:623px;width:598px;height:1px;background:#dedede"></div>
<div class="abs" style="left:654px;top:678px;width:598px;height:1px;background:#dedede"></div>
<div class="abs" style="left:654px;top:733px;width:598px;height:1px;background:#dedede"></div>
<div class="abs" style="left:654px;top:788px;width:598px;height:1px;background:#dedede"></div>
<div class="t" style="left:668.40px;top:526.32px;font-size:14.67px;letter-spacing:0.118px;color:#222;">Auto-hide the Dock</div>
<div class="t" style="left:668.40px;top:543.37px;font-size:12.2px;letter-spacing:0.023px;color:#777777;">The dock hides when any windows overlap with it.</div>
<div class="abs" style="left:1188px;top:528px;width:50px;height:25.5px;border-radius:13px;background:#cfcfcf"></div><div class="abs" style="left:1189.5px;top:529.5px;width:22.5px;height:22.5px;border-radius:50%;background:#fff;border:1px solid #bdbdbd"></div>
<div class="t" style="left:668.40px;top:581.22px;font-size:14.67px;letter-spacing:0.000px;color:#222;">Panel mode</div>
<div class="t" style="left:668.40px;top:598.87px;font-size:12.2px;letter-spacing:0.087px;color:#777777;">The dock extends to the screen edge.</div>
<div class="abs" style="left:1188px;top:583.3px;width:50px;height:25.5px;border-radius:13px;background:#e95420"></div><div class="abs" style="left:1213.5px;top:584.9px;width:22.5px;height:22.5px;border-radius:50%;background:#fff;border:1px solid #a9532f"></div>
<div class="t" style="left:668.60px;top:643.52px;font-size:14.67px;letter-spacing:-0.225px;color:#222;">Icon size</div>
<div class="t" style="left:974.50px;top:643.42px;font-size:14.67px;letter-spacing:-0.800px;color:#707070;">48</div>
<div class="abs" style="left:1002px;top:649px;width:224px;height:4px;border-radius:2px;background:#dcdcdc"></div>
<div class="abs" style="left:1002px;top:649px;width:147px;height:4px;border-radius:2px;background:#e2602e"></div>
<svg class="abs" style="left:1138px;top:638px" width="26" height="30" viewBox="0 0 26 30">
<path d="M13,27 L5.5,18.5 A9.5,9.5 0 1 1 20.5,18.5 Z" fill="#fff" stroke="#b8b8b8" stroke-width="1"/></svg>
<div class="t" style="left:668.60px;top:698.32px;font-size:14.67px;letter-spacing:-0.433px;color:#222;">Show on</div>
<div class="t" style="left:1084.00px;top:698.82px;font-size:14.67px;letter-spacing:-0.203px;color:#222;">1. Unknown Display</div>
<svg class="abs" style="left:1223px;top:701.5px" width="14" height="10" viewBox="0 0 14 10"><path d="M2,2.5 L7,7.5 L12,2.5" fill="none" stroke="#2e2e2e" stroke-width="1.25"/></svg>
<div class="t" style="left:668.60px;top:753.62px;font-size:14.67px;letter-spacing:0.115px;color:#222;">Position on screen</div>
<div class="t" style="left:1183.30px;top:753.62px;font-size:14.67px;letter-spacing:0.750px;color:#222;">Left</div>
<svg class="abs" style="left:1223px;top:756.5px" width="14" height="10" viewBox="0 0 14 10"><path d="M2,2.5 L7,7.5 L12,2.5" fill="none" stroke="#2e2e2e" stroke-width="1.25"/></svg>
<div class="t" style="left:668.60px;top:808.72px;font-size:14.67px;letter-spacing:0.082px;color:#222;">Configure dock behavior</div>
<svg class="abs" style="left:1224px;top:806px" width="12" height="20" viewBox="0 0 12 20"><path d="M4,2 L9,9.5 L4,17" fill="none" stroke="#7a7a7a" stroke-width="1.1"/></svg>
</div></div>
</div></div>
<div class="abs" style="left:620px;top:223px;width:671px;height:249.5px;border:9.7px solid #e65320"></div>
</body></html>
